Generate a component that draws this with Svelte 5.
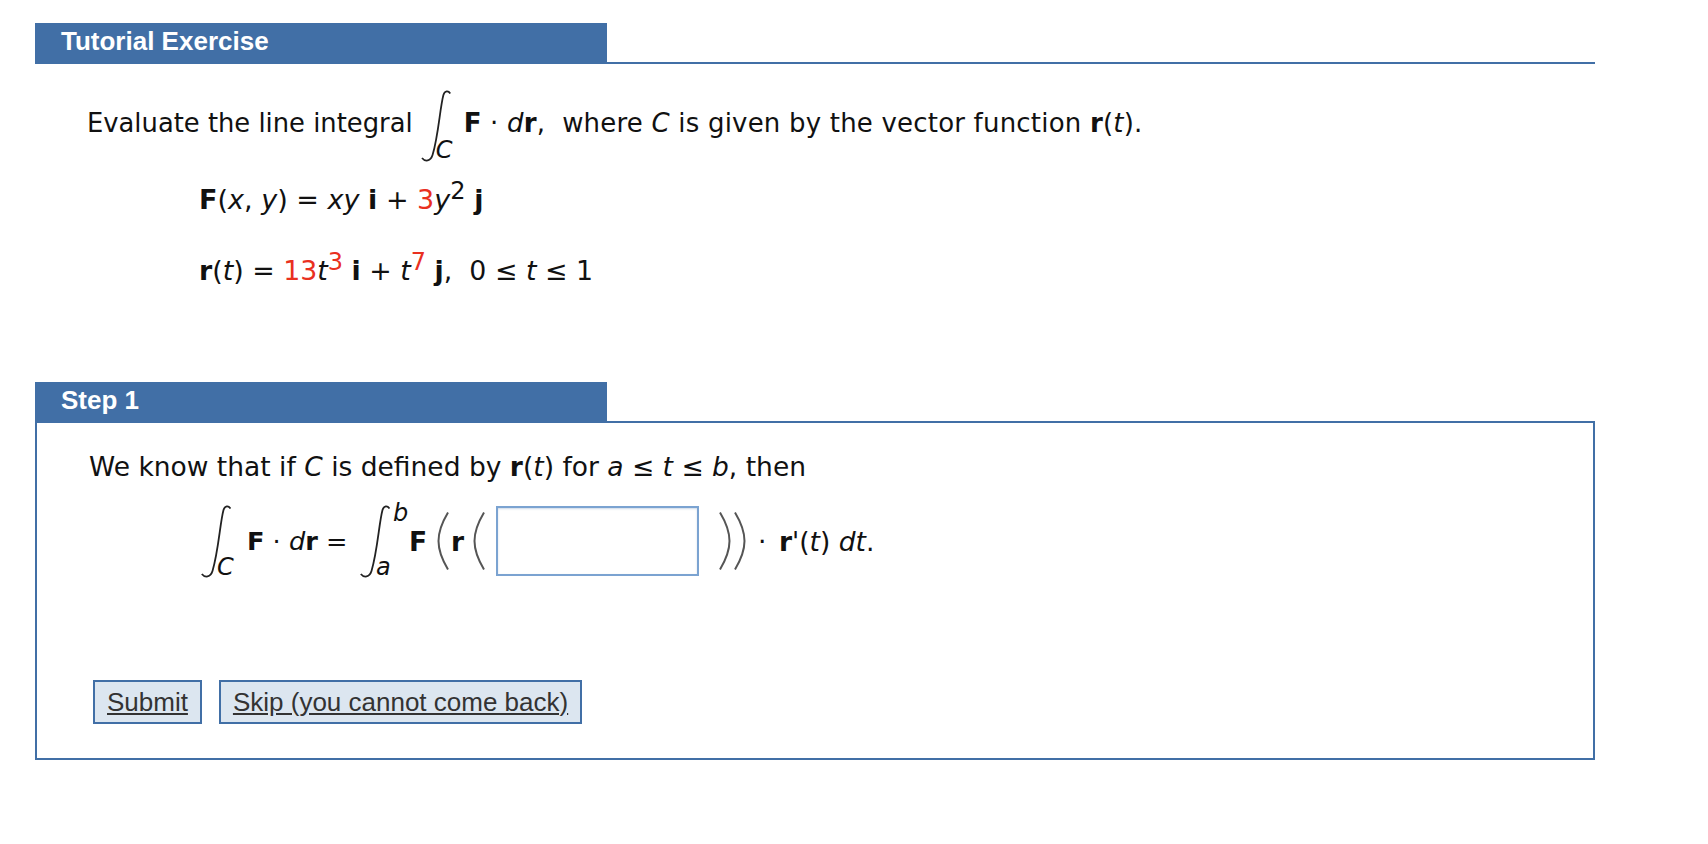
<script lang="ts">
	// Small helpers for the typeset bits that were images in the original page
	const integral = 'M29.5 3.5 C27.5 0.5 24 0.5 22.5 5 C19 18 17.5 46 11.5 66 C9.5 72.5 4 73 0.8 69';
	const parenL = 'M11 0.5 C3.5 13 1.5 22 1.5 29 C1.5 36 3.5 45 11 57.5';
	const parenR = 'M1 0.5 C8.5 13 10.5 22 10.5 29 C10.5 36 8.5 45 1 57.5';
</script>

<main class="page">
	<header class="head"><h2 class="tab">Tutorial Exercise</h2></header>

	<section class="problem">
		<div class="line intro">
			<span>Evaluate the line integral</span>
			<span class="int">
				<svg viewBox="0 0 30 73" width="30" height="72" aria-hidden="true"><path d={integral} /></svg>
				<i class="lower">C</i>
			</span>
			<span class="after"><b>F</b> · <i>d</i><b>r</b>,&nbsp; where <i>C</i> is given by the vector function <b>r</b>(<i>t</i>).</span>
		</div>
		<p class="given first"><b>F</b>(<i>x</i>, <i>y</i>) = <i>xy</i> <b>i</b> + <span class="red">3</span><i>y</i><sup>2</sup> <b>j</b></p>
		<p class="given second"><b>r</b>(<i>t</i>) = <span class="red">13</span><i>t</i><sup class="red">3</sup> <b>i</b> + <i>t</i><sup class="red">7</sup> <b>j</b>,&nbsp; 0 ≤ <i>t</i> ≤ 1</p>
	</section>

	<header class="head"><h2 class="tab">Step 1</h2></header>
	<section class="step">
		<p class="know">We know that if <i>C</i> is defined by <b>r</b>(<i>t</i>) for <i>a</i> ≤ <i>t</i> ≤ <i>b</i>, then</p>
		<div class="equation">
			<span class="int big">
				<svg viewBox="0 0 30 73" width="30" height="73" aria-hidden="true"><path d={integral} /></svg>
				<i class="lower">C</i>
			</span>
			<span class="lhs"><b>F</b> · <i>d</i><b>r</b> =</span>
			<span class="int big second-int">
				<svg viewBox="0 0 30 73" width="30" height="73" aria-hidden="true"><path d={integral} /></svg>
				<i class="upper">b</i>
				<i class="lower">a</i>
			</span>
			<b class="outer-f">F</b>
			<svg class="paren p1" viewBox="0 0 12 58" width="12" height="58" aria-hidden="true"><path d={parenL} /></svg>
			<b class="inner-r">r</b>
			<svg class="paren p2" viewBox="0 0 12 58" width="12" height="58" aria-hidden="true"><path d={parenL} /></svg>
			<input class="answer" type="text" aria-label="Answer" />
			<svg class="paren p3" viewBox="0 0 12 58" width="12" height="58" aria-hidden="true"><path d={parenR} /></svg>
			<svg class="paren p4" viewBox="0 0 12 58" width="12" height="58" aria-hidden="true"><path d={parenR} /></svg>
			<span class="rhs">· <b class="prime-r">r</b><i class="prime">'</i>(<i>t</i>) <i>dt</i>.</span>
		</div>
		<div class="actions">
			<button type="button">Submit</button>
			<button type="button">Skip (you cannot come back)</button>
		</div>
	</section>
</main>

<style>
	:global(body) {
		margin: 0;
		background: #fff;
	}
	.page {
		width: 1560px;
		margin-left: 35px;
		padding-top: 23px;
		font-family: "DejaVu Sans", Verdana, sans-serif;
		font-size: 26px;
		color: #111;
	}
	.head {
		border-bottom: 2px solid #416fa6;
		height: 39px;
	}
	.tab {
		box-sizing: border-box;
		width: 572px;
		height: 41px;
		margin: 0;
		padding-left: 26px;
		background: #416fa6;
		color: #fff;
		font: bold 26px/37px "Liberation Sans", Arial, sans-serif;
	}
	.problem {
		height: 295px;
		padding-left: 52px;
	}
	.line {
		display: flex;
		align-items: center;
		margin-top: 23px;
		height: 72px;
	}
	.intro > span:first-child {
		font-size: 25.8px;
	}
	.int {
		position: relative;
		display: inline-block;
		flex: none;
		width: 30px;
		height: 72px;
		margin-left: 8px;
	}
	.intro .int {
		top: 3px;
	}
	.int svg {
		display: block;
	}
	.int path {
		fill: none;
		stroke: #222;
		stroke-width: 1.8;
	}
	.paren path {
		fill: none;
		stroke: #555;
		stroke-width: 2;
	}
	.lower,
	.upper {
		position: absolute;
		font-size: 24px;
		line-height: 1;
	}
	.lower {
		left: 15px;
		bottom: 0;
	}
	.upper {
		left: 33px;
		top: -4px;
	}
	.after {
		margin-left: 13px;
		letter-spacing: 0.2px;
		white-space: pre-wrap;
	}
	.given {
		margin: 0 0 0 112px;
		font-size: 27px;
		line-height: 40px;
		white-space: nowrap;
	}
	.first {
		margin-top: 21px;
	}
	.second {
		margin-top: 31px;
		font-size: 26.8px;
	}
	sup {
		font-size: 24px;
		line-height: 0;
		vertical-align: 10px;
	}
	.red {
		color: #e9301f;
	}
	.step {
		box-sizing: border-box;
		height: 337px;
		padding: 24px 0 0 52px;
		border: 2px solid #416fa6;
		border-top: 0;
	}
	.know {
		margin: 0;
		font-size: 26.5px;
		line-height: 40px;
	}
	.equation {
		display: flex;
		align-items: center;
		height: 82px;
		margin: 13px 0 0 112px;
		font-size: 26.5px;
		white-space: nowrap;
	}
	.big {
		height: 73px;
		margin-left: 0;
	}
	.big .lower {
		left: 16px;
		bottom: -1px;
	}
	.lhs {
		margin-left: 16px;
		font-size: 25.6px;
	}
	.second-int {
		margin-left: 12.5px;
	}
	.outer-f {
		margin-left: 19px;
	}
	.paren {
		flex: none;
	}
	.p1 {
		margin-left: 10px;
	}
	.inner-r {
		margin-left: 2px;
	}
	.p2 {
		margin-left: 9px;
	}
	.answer {
		box-sizing: border-box;
		width: 203px;
		height: 70px;
		margin-left: 11px;
		border: 2px solid #7ba3d1;
		box-shadow: inset 0 1px 2px rgba(90, 130, 180, 0.3);
		background: #fff;
		outline: 0;
	}
	.p3 {
		margin-left: 20px;
	}
	.p4 {
		margin-left: 3px;
	}
	.rhs {
		margin-left: 12px;
		font-size: 26.5px;
	}
	.prime-r {
		margin-left: 4px;
	}
	.prime {
		font-size: 26px;
	}
	.actions {
		display: flex;
		gap: 17px;
		margin: 98px 0 0 4px;
	}
	button {
		height: 44px;
		padding: 0 12px;
		border: 2px solid #416fa6;
		background: #dce6f0;
		color: #333;
		font: 26px "Liberation Sans", Arial, sans-serif;
		text-decoration: underline;
	}
</style>
